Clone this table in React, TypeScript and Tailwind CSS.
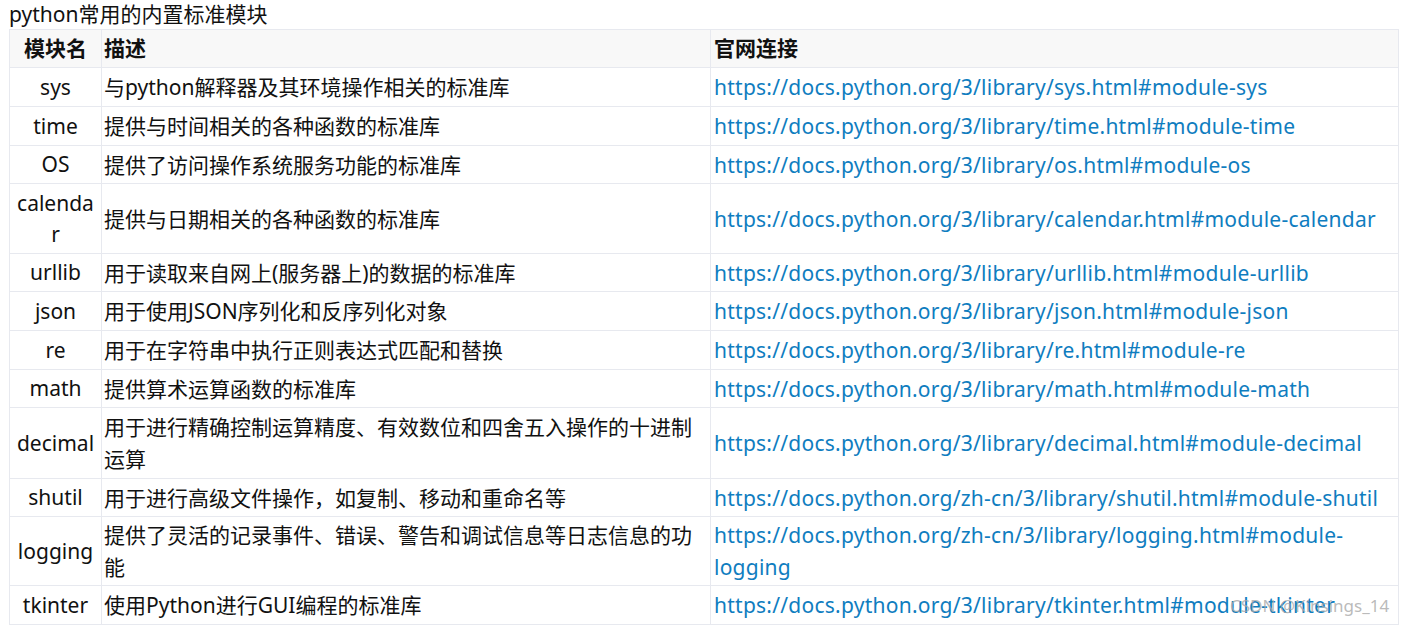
import React from "react";

const ROWS: { name: React.ReactNode; desc: string; url: React.ReactNode; h: string }[] = [
  { h: "h-[39px]", name: "sys", desc: "与python解释器及其环境操作相关的标准库", url: "https://docs.python.org/3/library/sys.html#module-sys" },
  { h: "h-[39px]", name: "time", desc: "提供与时间相关的各种函数的标准库", url: "https://docs.python.org/3/library/time.html#module-time" },
  { h: "h-[38px]", name: "OS", desc: "提供了访问操作系统服务功能的标准库", url: "https://docs.python.org/3/library/os.html#module-os" },
  {
    h: "h-[70px]",
    name: (
      <>
        calenda
        <br />r
      </>
    ),
    desc: "提供与日期相关的各种函数的标准库",
    url: "https://docs.python.org/3/library/calendar.html#module-calendar",
  },
  { h: "h-[38px]", name: "urllib", desc: "用于读取来自网上(服务器上)的数据的标准库", url: "https://docs.python.org/3/library/urllib.html#module-urllib" },
  { h: "h-[39px]", name: "json", desc: "用于使用JSON序列化和反序列化对象", url: "https://docs.python.org/3/library/json.html#module-json" },
  { h: "h-[39px]", name: "re", desc: "用于在字符串中执行正则表达式匹配和替换", url: "https://docs.python.org/3/library/re.html#module-re" },
  { h: "h-[38px]", name: "math", desc: "提供算术运算函数的标准库", url: "https://docs.python.org/3/library/math.html#module-math" },
  {
    h: "h-[71px]",
    name: "decimal",
    desc: "用于进行精确控制运算精度、有效数位和四舍五入操作的十进制运算",
    url: "https://docs.python.org/3/library/decimal.html#module-decimal",
  },
  { h: "h-[38px]", name: "shutil", desc: "用于进行高级文件操作，如复制、移动和重命名等", url: "https://docs.python.org/zh-cn/3/library/shutil.html#module-shutil" },
  {
    h: "h-[69px]",
    name: "logging",
    desc: "提供了灵活的记录事件、错误、警告和调试信息等日志信息的功能",
    url: (
      <>
        https://docs.python.org/zh-cn/3/library/logging.html#module-
        <br />
        logging
      </>
    ),
  },
  { h: "h-[39px]", name: "tkinter", desc: "使用Python进行GUI编程的标准库", url: "https://docs.python.org/3/library/tkinter.html#module-tkinter" },
];

export default function App() {
  return (
    <div className="relative w-[1403px] h-[626px] overflow-hidden bg-white text-[#111] font-['Noto_Sans','Noto_Sans_CJK_SC',sans-serif] text-[21px] leading-[31px]">
      <div className="pl-[9px] h-[29px] leading-[29px]">python常用的内置标准模块</div>
      <table className="ml-[9px] w-[1389px] table-fixed border-collapse">
        <colgroup>
          <col className="w-[92px]" />
          <col className="w-[609px]" />
          <col className="w-[688px]" />
        </colgroup>
        <thead>
          <tr className="bg-[#f8f8f8] font-bold h-[38px]">
            <th className="border border-[#e7e9ef] p-0 px-[4px] text-center">模块名</th>
            <th className="border border-[#e7e9ef] p-0 pl-[2px] pr-[4px] text-left">描述</th>
            <th className="border border-[#e7e9ef] p-0 pl-[3px] pr-[4px] text-left">官网连接</th>
          </tr>
        </thead>
        <tbody>
          {ROWS.map((r, i) => (
            <tr key={i} className={r.h}>
              <td className="border border-[#e7e9ef] p-0 px-[4px] text-center">{r.name}</td>
              <td className="border border-[#e7e9ef] p-0 pl-[2px] pr-[4px] leading-[32px]">{r.desc}</td>
              <td className="border border-[#e7e9ef] p-0 pl-[3px] pr-[4px] text-[#0f7dbf] tracking-[0.25px] leading-[32px]">{r.url}</td>
            </tr>
          ))}
        </tbody>
      </table>
      <div className="absolute left-[1230px] top-[594px] text-[17px] leading-[24px] text-[#a8a8a8]/80 font-['Noto_Sans',sans-serif]">
        CSDN @Kinsings_14
      </div>
    </div>
  );
}
